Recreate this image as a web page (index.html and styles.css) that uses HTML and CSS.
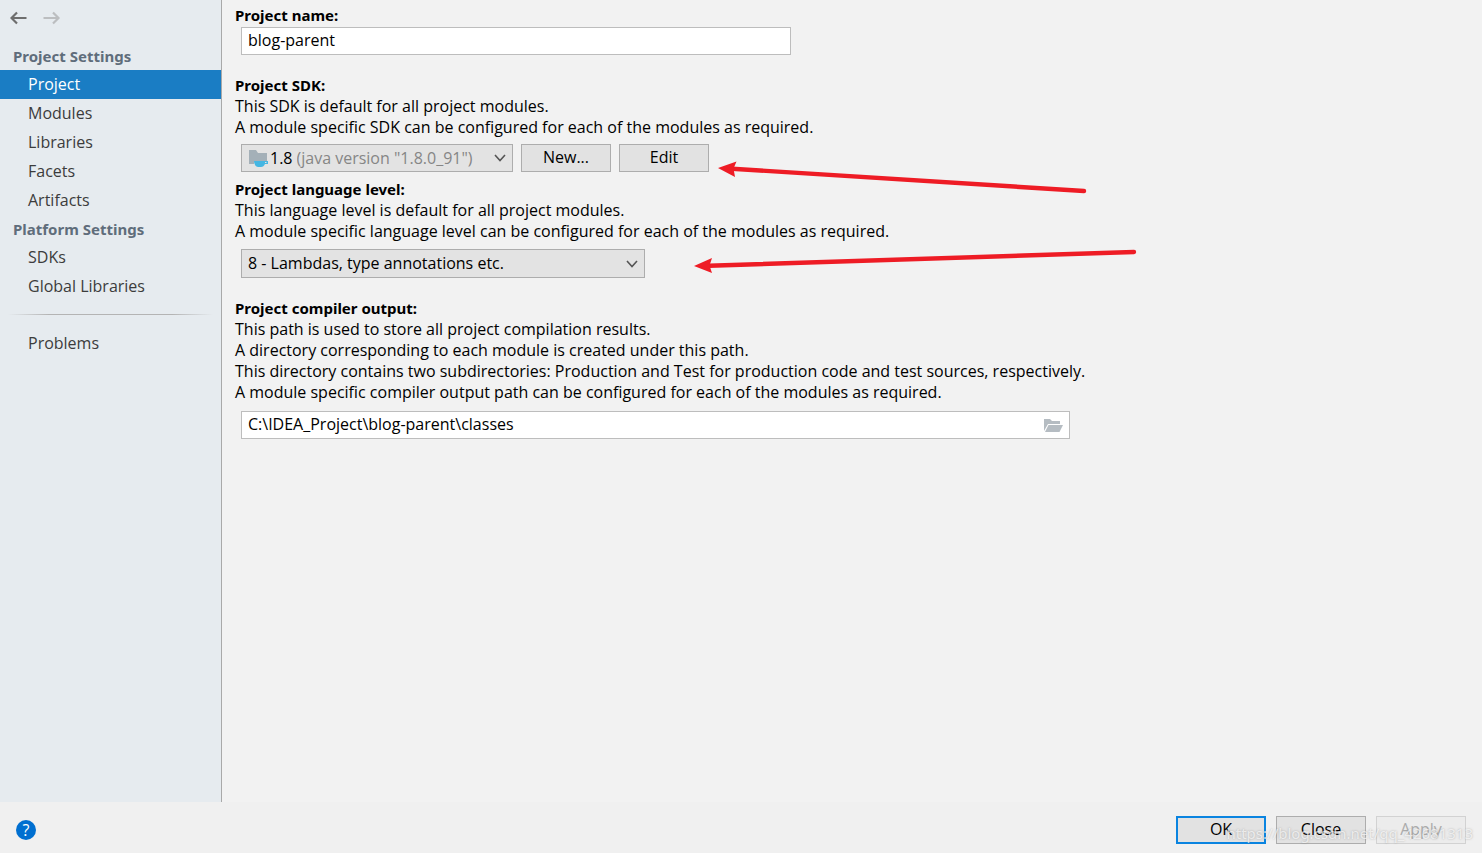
FILE: index.html
```html
<!DOCTYPE html>
<html lang="en">
<head>
<meta charset="utf-8">
<title>Project Structure</title>
<link rel="stylesheet" href="styles.css">
</head>
<body class="window">
<div class="body">
  <nav class="sidebar" aria-label="Settings">
    <div class="history">
      <button class="history-btn" type="button" aria-label="Back"><svg width="18" height="14" viewBox="0 0 18 14"><path d="M16.500 7H2M7 1.500L1.500 7L7 12.500" fill="none" stroke="#6e6e6e" stroke-width="2.200"/></svg></button>
      <button class="history-btn" type="button" aria-label="Forward" disabled><svg width="18" height="14" viewBox="0 0 18 14"><path d="M0.500 7h15M10 1.500L15.500 7L10 12.500" fill="none" stroke="#bcbec0" stroke-width="2.200"/></svg></button>
    </div>
    <h2 class="group">Project Settings</h2>
    <a class="item item-active" href="#project" aria-current="page">Project</a>
    <a class="item" href="#modules">Modules</a>
    <a class="item" href="#libraries">Libraries</a>
    <a class="item" href="#facets">Facets</a>
    <a class="item" href="#artifacts">Artifacts</a>
    <h2 class="group">Platform Settings</h2>
    <a class="item" href="#sdks">SDKs</a>
    <a class="item" href="#global">Global Libraries</a>
    <hr class="divider">
    <a class="item" href="#problems">Problems</a>
  </nav>
  <main class="content">
    <section class="section">
      <label class="title" for="name">Project name:</label>
      <input class="field name-field" id="name" type="text" value="blog-parent">
    </section>
    <section class="section">
      <label class="title" for="sdk">Project SDK:</label>
      <p class="text">This SDK is default for all project modules.</p>
      <p class="text">A module specific SDK can be configured for each of the modules as required.</p>
      <div class="row">
        <div class="combo sdk-combo">
          <svg class="sdk-icon" width="20" height="18" viewBox="0 0 20 18"><path d="M1 1h7l2 3h9v8H6v3H1z" fill="#a4b0b8"/><path d="M6 12h14v3h-3c-1 2-2 3-4 3h-3c-2 0-4-3-4-6z" fill="#45b6e2"/><path d="M17 13h1.500v1H17z" fill="#e3e3e3"/></svg>
          <label class="sdk-name" for="sdk">1.8</label>
          <select class="select sdk-select" id="sdk"><option>(java version "1.8.0_91")</option></select>
          <svg class="chevron" width="12" height="8" viewBox="0 0 12 8"><path d="M1 1l5 5.500L11 1" fill="none" stroke="#555" stroke-width="1.600"/></svg>
        </div>
        <button class="button" type="button">New...</button>
        <button class="button" type="button">Edit</button>
      </div>
    </section>
    <section class="section section-near">
      <label class="title" for="level">Project language level:</label>
      <p class="text">This language level is default for all project modules.</p>
      <p class="text">A module specific language level can be configured for each of the modules as required.</p>
      <div class="combo level-combo">
        <select class="select" id="level"><option>8 - Lambdas, type annotations etc.</option></select>
        <svg class="chevron" width="12" height="8" viewBox="0 0 12 8"><path d="M1 1l5 5.500L11 1" fill="none" stroke="#555" stroke-width="1.600"/></svg>
      </div>
    </section>
    <section class="section">
      <label class="title" for="output">Project compiler output:</label>
      <p class="text">This path is used to store all project compilation results.</p>
      <p class="text">A directory corresponding to each module is created under this path.</p>
      <p class="text">This directory contains two subdirectories: Production and Test for production code and test sources, respectively.</p>
      <p class="text">A module specific compiler output path can be configured for each of the modules as required.</p>
      <div class="field path-field">
        <input class="path-input" id="output" type="text" value="C:\IDEA_Project\blog-parent\classes">
        <button class="browse" type="button" aria-label="Browse"><svg width="19" height="15" viewBox="0 0 19 15"><path d="M0 1h6l2 2h8v3H4L0 13z" fill="#b5bcc2"/><path d="M4.500 7H19l-3.500 7H1z" fill="#b5bcc2"/></svg></button>
      </div>
    </section>
  </main>
</div>
<footer class="footer">
  <button class="help" type="button" aria-label="Help"><span class="help-mark">?</span></button>
  <div class="actions">
    <button class="button button-primary" type="button">OK</button>
    <button class="button" type="button">Close</button>
    <button class="button" type="button" disabled>Apply</button>
  </div>
</footer>
<svg class="arrows" width="450" height="120" viewBox="690 160 450 120" aria-hidden="true">
  <g stroke="#ee1c25" stroke-width="4.400" stroke-linecap="round"><path d="M1084 191L732 168.700"/><path d="M1134 252L709 265.700"/></g>
  <g fill="#ee1c25"><path d="M718 168L736.500 161.500L733.500 168.500L735 177z"/><path d="M694 266L712 258L709.500 265.500L712 273z"/></g>
</svg>
<div class="watermark">https://blog.csdn.net/qq_42681313</div>
</body>
</html>
```

FILE: styles.css
```css
* { box-sizing: border-box; }
.window {
  margin: 0;
  min-height: 100vh;
  display: flex;
  flex-direction: column;
  position: relative;
  background: #f2f2f2;
  color: #000;
  font: 16px/21px "Open Sans", "Noto Sans", sans-serif;
}
button, input, select { font: inherit; color: inherit; }
.body { flex: 1; display: flex; }

.sidebar {
  width: 222px;
  flex: none;
  background: #e6ebef;
  border-right: 1px solid #a9a9a9;
}
.history { display: flex; gap: 15px; padding: 11px 10px 0; height: 42px; align-items: flex-start; }
.history-btn { display: flex; padding: 0; border: 0; background: none; }
.group { margin: 0; padding: 1px 0 0 13px; font: 700 15px/27px "Noto Sans", sans-serif; color: #5f6d7b; }
.item { display: block; padding-left: 28px; line-height: 29px; color: #3c3c3c; text-decoration: none; }
.item-active { background: #1a7dc4; color: #fff; }
.divider {
  height: 1px;
  border: 0;
  margin: 13px 8px 14px;
  background: linear-gradient(to right, transparent, #b4b4b4 20%, #b4b4b4 80%, transparent);
}

.content { flex: 1; padding: 4px 13px; }
.section { margin-bottom: 19px; }
.section-near { margin-top: -13px; }
.title { display: block; font: 700 15px/22px "Noto Sans", sans-serif; }
.text { margin: 0; }
.field, .combo { margin-left: 6px; border: 1px solid #bdbdbd; background: #fff; height: 28px; }
.name-field { display: block; width: 550px; max-width: 100%; padding: 0 6px 2px; margin-top: 1px; }
.row { display: flex; gap: 8px; margin-top: 6px; }
.combo { display: flex; align-items: center; background: #e3e3e3; border-color: #adadad; padding: 0 6px; }
.sdk-combo { width: 272px; }
.level-combo { width: 404px; height: 29px; margin-top: 7px; }
.select { flex: 1; min-width: 0; padding: 0; border: 0; background: none; appearance: none; }
.sdk-name { margin: 0 4px 0 2px; }
.sdk-select { color: #868686; }
.path-field { display: flex; align-items: center; width: 829px; max-width: 100%; margin-top: 8px; padding: 0 6px; }
.path-input { flex: 1; min-width: 0; padding: 0 0 2px; border: 0; background: none; }
.browse { display: flex; padding: 0; border: 0; background: none; }
.button { width: 90px; height: 28px; padding: 0 0 1px; border: 1px solid #adadad; background: #e2e2e2; }
.button:disabled { border-color: #d2d2d2; background: #ececec; color: #ababab; }
.button-primary { border: 2px solid #0a84e0; }

.footer { display: flex; align-items: center; justify-content: space-between; height: 51px; padding: 4px 16px 0 15px; background: #f0f0f0; }
.help { display: grid; place-items: center; width: 22px; height: 30px; padding: 0; border: 0; background: none; }
.help-mark { width: 20px; height: 20px; border-radius: 50%; background: #006fd0; color: #fff; line-height: 20px; text-align: center; }
.actions { display: flex; gap: 10px; }

.arrows { position: absolute; left: 690px; top: 160px; pointer-events: none; }
.watermark {
  position: absolute;
  right: 9px;
  bottom: 9px;
  font: 15px/21px "Noto Sans", sans-serif;
  color: rgba(255, 255, 255, 0.7);
  text-shadow: 0 0 2px rgba(110, 110, 110, 0.5);
  pointer-events: none;
}
```
